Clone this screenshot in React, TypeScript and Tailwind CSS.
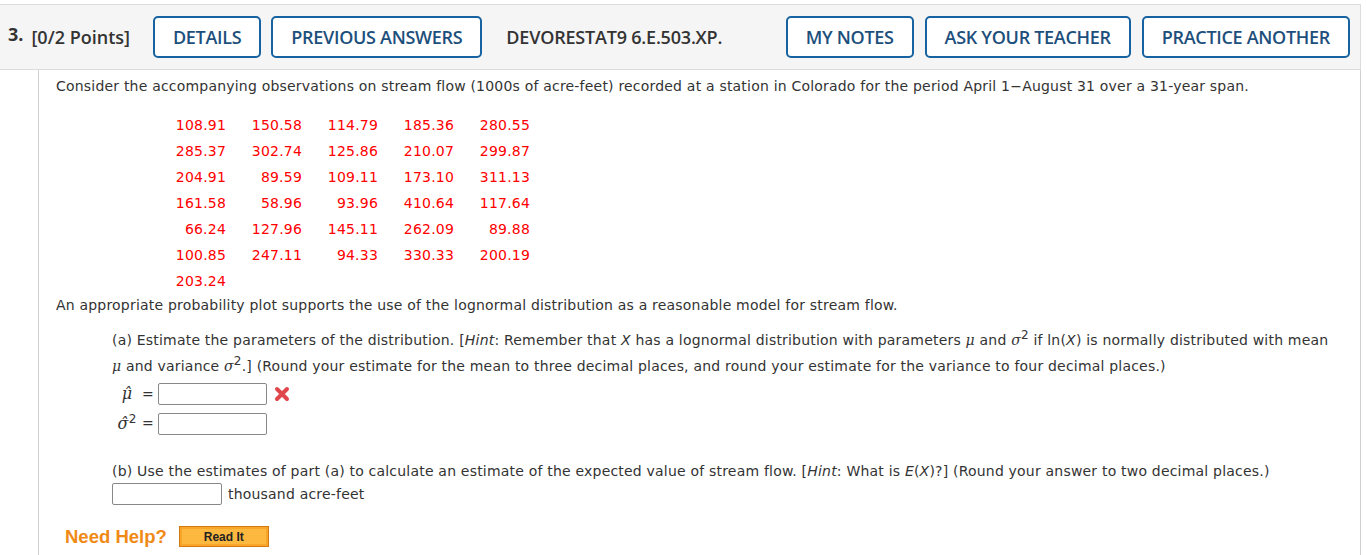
import React from 'react';

const rows = [
  ['108.91', '150.58', '114.79', '185.36', '280.55'],
  ['285.37', '302.74', '125.86', '210.07', '299.87'],
  ['204.91', '89.59', '109.11', '173.10', '311.13'],
  ['161.58', '58.96', '93.96', '410.64', '117.64'],
  ['66.24', '127.96', '145.11', '262.09', '89.88'],
  ['100.85', '247.11', '94.33', '330.33', '200.19'],
  ['203.24'],
];

function HeaderButton({ label }: { label: string }) {
  return (
    <button className="h-[42px] px-[18px] border-2 border-[#1762a0] rounded-[5px] bg-white text-[#1d4f7c] text-[18px] font-semibold tracking-[-0.3px]">
      {label}
    </button>
  );
}

function Sigma() {
  return <i className="font-['DejaVu_Serif',serif]">σ</i>;
}

export default function App() {
  return (
    <div className="min-h-[555px] bg-white pt-[4px] font-['DejaVu_Sans',Verdana,sans-serif] text-[#333] text-[14px] tracking-[0.2px]">
      <div className="w-[1361px] h-[66px] bg-[#f5f5f5] border-y border-r border-[#dcdcdc] flex items-center pl-[8px] pr-[10px] font-['Open_Sans',sans-serif] text-[#333] tracking-normal">
        <span className="text-[18px] font-bold mr-[8px] -mt-[6px]">3.</span>
        <span className="text-[18px] font-semibold mr-[23px]">[0/2 Points]</span>
        <div className="flex gap-[10px]">
          <HeaderButton label="DETAILS" />
          <HeaderButton label="PREVIOUS ANSWERS" />
        </div>
        <span className="ml-[24px] text-[18px] font-semibold tracking-[-0.2px]">DEVORESTAT9 6.E.503.XP.</span>
        <div className="ml-auto flex gap-[11px]">
          <HeaderButton label="MY NOTES" />
          <HeaderButton label="ASK YOUR TEACHER" />
          <HeaderButton label="PRACTICE ANOTHER" />
        </div>
      </div>
      <div className="ml-[38px] w-[1323px] border-l border-r border-[#d0d0d0] pl-[17px] pt-[6px] pb-[6px]">
        <p className="leading-[20px]">
          Consider the accompanying observations on stream flow (1000s of acre-feet) recorded at a station in Colorado for the period April 1−August 31 over a 31-year span.
        </p>
        <table className="ml-[94px] mt-[16px] text-[#ff0000] border-separate border-spacing-0">
          <tbody>
            {rows.map((r, i) => (
              <tr key={i}>
                {r.map((v, j) => (
                  <td key={j} className="w-[76px] text-right h-[26px] align-middle pr-0">
                    {v}
                  </td>
                ))}
              </tr>
            ))}
          </tbody>
        </table>
        <p className="mt-[1px] leading-[20px]">
          An appropriate probability plot supports the use of the lognormal distribution as a reasonable model for stream flow.
        </p>
        <div className="ml-[56px] mt-[12px] pr-[20px]">
          <p className="leading-[26px]">
            (a) Estimate the parameters of the distribution. [<i>Hint</i>: Remember that <i>X</i> has a lognormal distribution with parameters <i className="font-['DejaVu_Serif',serif]">μ</i> and <Sigma />
            <sup className="text-[12px]">2</sup> if ln(<i>X</i>) is normally distributed with mean <i className="font-['DejaVu_Serif',serif]">μ</i> and variance <Sigma />
            <sup className="text-[12px]">2</sup>.] (Round your estimate for the mean to three decimal places, and round your estimate for the variance to four decimal places.)
          </p>
          <div className="flex items-center h-[28px] mt-[1px]">
            <span className="w-[30px] text-center font-['DejaVu_Serif',serif] italic text-[16px]">μ̂</span>
            <span className="w-[16px]">=</span>
            <input className="w-[109px] h-[22px] border border-[#888] rounded-[2px] bg-white" />
            <svg className="ml-[7px]" width="16" height="16" viewBox="0 0 16 16">
              <path d="M3 3 L13 13 M13 3 L3 13" stroke="#e0474c" strokeWidth="4" strokeLinecap="round" />
            </svg>
          </div>
          <div className="flex items-center h-[29px] mt-[1px]">
            <span className="w-[30px] text-center">
              <i className="font-['DejaVu_Serif',serif] text-[16px]">σ̂</i>
              <sup className="text-[12px]">2</sup>
            </span>
            <span className="w-[16px]">=</span>
            <input className="w-[109px] h-[22px] border border-[#888] rounded-[2px] bg-white" />
          </div>
          <p className="mt-[23px] leading-[20px]">
            (b) Use the estimates of part (a) to calculate an estimate of the expected value of stream flow. [<i>Hint</i>: What is <i>E</i>(<i>X</i>)?] (Round your answer to two decimal places.)
          </p>
          <div className="flex items-center mt-[2px]">
            <input className="w-[110px] h-[22px] border border-[#888] rounded-[2px] bg-white" />
            <span className="ml-[6px]">thousand acre-feet</span>
          </div>
        </div>
        <div className="flex items-center mt-[18px] ml-[9px]">
          <span className="font-['Liberation_Sans',Arial,sans-serif] font-bold text-[18.5px] tracking-normal text-[#f08a16]">Need Help?</span>
          <button className="ml-[12px] w-[90px] h-[21px] border border-[#d07a10] bg-[#fdb93f] shadow-[inset_0_0_0_2px_#f9a52a] font-['Liberation_Sans',Arial,sans-serif] font-bold text-[12px] tracking-normal text-[#222]">
            Read It
          </button>
        </div>
      </div>
    </div>
  );
}
